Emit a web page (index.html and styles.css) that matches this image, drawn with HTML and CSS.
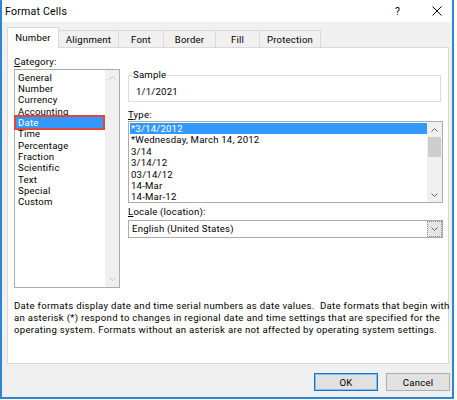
FILE: index.html
```html
<!DOCTYPE html>
<html>
<head>
<meta charset="utf-8">
<link rel="stylesheet" href="styles.css">
</head>
<body>
<div class="window">
  <div class="titlebar">
    <span class="title">Format Cells</span>
    <span class="help">?</span>
    <svg class="close" width="10" height="10" viewBox="0 0 10 10"><path d="M0.5 0.5L9.5 9.5M9.5 0.5L0.5 9.5" stroke="#000" stroke-width="1" fill="none"/></svg>
  </div>
  <div class="body">
    <div class="tabs">
      <div class="tab active t-number">Number</div>
      <div class="tab t-alignment">Alignment</div>
      <div class="tab t-font">Font</div>
      <div class="tab t-border">Border</div>
      <div class="tab t-fill">Fill</div>
      <div class="tab t-protection">Protection</div>
    </div>
    <div class="panel">
      <div class="cols">
        <div class="left">
          <div class="label"><u>C</u>ategory:</div>
          <div class="listbox cat">
            <div class="items">
              <div class="item">General</div>
              <div class="item">Number</div>
              <div class="item">Currency</div>
              <div class="item">Accounting</div>
              <div class="item sel marked">Date</div>
              <div class="item">Time</div>
              <div class="item">Percentage</div>
              <div class="item">Fraction</div>
              <div class="item">Scientific</div>
              <div class="item">Text</div>
              <div class="item">Special</div>
              <div class="item">Custom</div>
            </div>
            <div class="vscroll disabled">
              <div class="arrow"><svg width="7" height="4" viewBox="0 0 7 4"><path d="M0.5 3.5L3.5 0.5L6.5 3.5" stroke="currentColor" fill="none"/></svg></div>
              <div class="arrow"><svg width="7" height="4" viewBox="0 0 7 4"><path d="M0.5 0.5L3.5 3.5L6.5 0.5" stroke="currentColor" fill="none"/></svg></div>
            </div>
          </div>
        </div>
        <div class="right">
          <fieldset class="sample">
            <legend>Sample</legend>
            <div class="sample-value">1/1/2021</div>
          </fieldset>
          <div class="label type-label"><u>T</u>ype:</div>
          <div class="listbox typelist">
            <div class="items">
              <div class="item sel">*3/14/2012</div>
              <div class="item">*Wednesday, March 14, 2012</div>
              <div class="item">3/14</div>
              <div class="item">3/14/12</div>
              <div class="item">03/14/12</div>
              <div class="item">14-Mar</div>
              <div class="item">14-Mar-12</div>
            </div>
            <div class="vscroll">
              <div class="arrow"><svg width="7" height="4" viewBox="0 0 7 4"><path d="M0.5 3.5L3.5 0.5L6.5 3.5" stroke="currentColor" fill="none"/></svg></div>
              <div class="thumb"></div>
              <div class="spacer"></div>
              <div class="arrow"><svg width="7" height="4" viewBox="0 0 7 4"><path d="M0.5 0.5L3.5 3.5L6.5 0.5" stroke="currentColor" fill="none"/></svg></div>
            </div>
          </div>
          <div class="label locale-label"><u>L</u>ocale (location):</div>
          <div class="combo">
            <span class="combo-text">English (United States)</span>
            <span class="combo-btn"><svg width="7" height="4" viewBox="0 0 7 4"><path d="M0.5 0.5L3.5 3.5L6.5 0.5" stroke="currentColor" fill="none"/></svg></span>
          </div>
        </div>
      </div>
      <p class="desc">Date formats display date and time serial numbers as date values.&nbsp; Date formats that begin with<br>an asterisk (*) respond to changes in regional date and time settings that are specified for the<br>operating system. Formats without an asterisk are not affected by operating system settings.</p>
    </div>
    <div class="buttons">
      <button class="btn default">OK</button>
      <button class="btn">Cancel</button>
    </div>
  </div>
</div>
</body>
</html>
```

FILE: styles.css
```css
html, body {
  margin: 0;
  padding: 0;
  background: #ffffff;
}
body {
  font-family: Roboto, "Noto Sans", sans-serif;
  font-size: 9.6px;
  letter-spacing: 0.2px;
  color: #000;
}
.window {
  box-sizing: border-box;
  width: 454px;
  height: 399px;
  border: 2px solid #2b86d6;
  border-top: 0;
  background: #f0f0f0;
  display: flex;
  flex-direction: column;
}
.titlebar {
  height: 22px;
  flex: none;
  background: #fff;
  display: flex;
  align-items: center;
  padding-left: 3px;
}
.title {
  font-size: 10.6px;
}
.help {
  margin-left: auto;
  font-size: 10.5px;
  width: 6px;
}
.close {
  margin-left: 31px;
  margin-right: 10px;
}
.body {
  flex: 1;
  display: flex;
  flex-direction: column;
  padding: 6px 3px 0 5px;
}
.tabs {
  display: flex;
  align-items: flex-end;
  height: 20px;
  position: relative;
  z-index: 1;
  margin-bottom: -1px;
}
.tab {
  box-sizing: border-box;
  flex: none;
  height: 17px;
  border: 1px solid #d9d9d9;
  border-bottom: 0;
  background: #f0f0f0;
  display: flex;
  align-items: center;
  justify-content: center;
  margin-left: -1px;
  margin-bottom: 1px;
}
.tab:first-child {
  margin-left: 0;
}
.t-number { width: 52px; }
.t-alignment { width: 61px; }
.t-font { width: 46px; }
.t-border { width: 53px; }
.t-fill { width: 45px; }
.t-protection { width: 62px; }
.tab.active {
  height: 21px;
  background: #fff;
  margin-bottom: 0;
  padding-bottom: 1px;
}
.panel {
  box-sizing: border-box;
  height: 317px;
  flex: none;
  background: #fff;
  border: 1px solid #d9d9d9;
  padding: 8px 4px 0 6px;
}
.cols {
  display: flex;
  gap: 8px;
}
.left {
  width: 106px;
  flex: none;
}
.right {
  width: 315px;
  flex: none;
}
.label {
  line-height: 12px;
  height: 12px;
}
.listbox {
  box-sizing: border-box;
  border: 1px solid #acacac;
  background: #fff;
  display: flex;
}
.items {
  flex: 1;
  padding-top: 1px;
}
.item {
  height: 11.36px;
  line-height: 11.36px;
  padding-left: 3px;
  white-space: nowrap;
}
.item.sel {
  background: #3399ff;
  color: #fff;
}
.cat {
  height: 219px;
  margin-top: 1px;
}
.cat .items {
  padding-top: 1.5px;
}
.item.marked {
  margin: 0 2px 0 1px;
  padding-left: 2px;
  outline: 2px solid #e5453b;
}
.vscroll {
  width: 15px;
  flex: none;
  background: #f0f0f0;
  display: flex;
  flex-direction: column;
  justify-content: space-between;
  color: #606060;
}
.cat .vscroll {
  width: 14px;
}
.vscroll.disabled {
  color: #c3c3c3;
}
.arrow {
  height: 16px;
  display: flex;
  align-items: center;
  justify-content: center;
}
.typelist .arrow {
  height: 15px;
}
.thumb {
  height: 20px;
  background: #cdcdcd;
  margin: 0 1px;
}
.spacer {
  flex: 1;
}
.sample {
  margin: 13px 2px 0 0;
  padding: 5px 6px 3px 7px;
  border: 1px solid #dcdcdc;
  min-width: 0;
}
.sample legend {
  padding: 0 1px;
  margin-left: -4px;
  line-height: 12px;
}
.sample-value {
  line-height: 12px;
  height: 12px;
}
.type-label {
  margin-top: 7px;
}
.typelist {
  height: 82px;
}
.typelist .items {
  padding: 1px 0 0 1px;
}
.typelist .item {
  padding-left: 1px;
  height: 11.4px;
  line-height: 11.4px;
}
.locale-label {
  margin-top: 3px;
}
.combo {
  box-sizing: border-box;
  margin-top: 2px;
  height: 18px;
  border: 1px solid #acacac;
  background: #fff;
  display: flex;
  align-items: stretch;
}
.combo-text {
  flex: 1;
  padding-left: 3px;
  line-height: 16px;
}
.combo-btn {
  box-sizing: border-box;
  width: 15px;
  background: #e5e5e5;
  border: 1px dotted #8a8a8a;
  color: #606060;
  display: flex;
  align-items: center;
  justify-content: center;
}
.desc {
  margin: 12px 0 0 0;
  line-height: 12px;
  letter-spacing: 0.3px;
  white-space: nowrap;
}
.buttons {
  display: flex;
  justify-content: flex-end;
  gap: 8px;
  margin-top: 9px;
  margin-right: -1px;
}
.btn {
  box-sizing: border-box;
  width: 64px;
  height: 18px;
  padding: 0;
  font-family: inherit;
  font-size: 9.6px;
  letter-spacing: 0.2px;
  color: #000;
  background: #e1e1e1;
  border: 1px solid #adadad;
}
.btn.default {
  border-color: #0078d7;
  box-shadow: inset 0 0 0 1px rgba(0, 120, 215, 0.35);
}
```
